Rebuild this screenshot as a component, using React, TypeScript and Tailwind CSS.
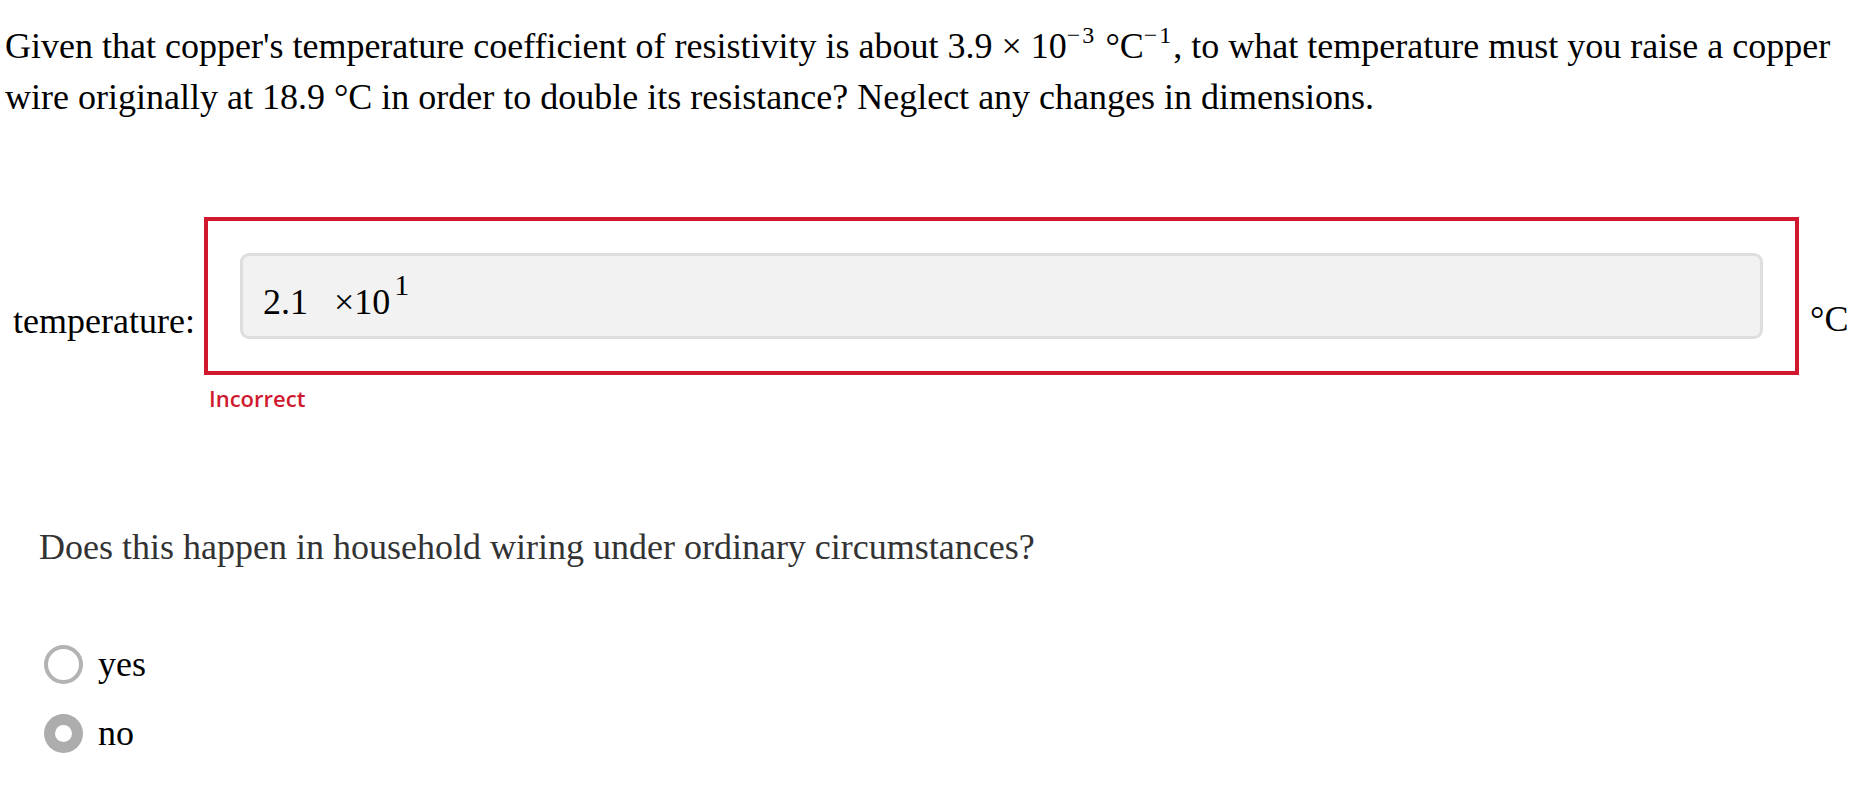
export default function App() {
  return (
    <div className="w-[1876px] h-[790px] bg-white text-black font-['Liberation_Serif',_'Times_New_Roman',_serif] text-[36px] leading-[51px]">
      {/* Question text */}
      <p className="pl-[5px] pt-[21px]">
        Given that copper's temperature coefficient of resistivity is about 3.9 × 10
        <span className="text-[24px] leading-none align-[15px] tracking-[2px]">−3</span> °C
        <span className="text-[24px] leading-none align-[15px] tracking-[2px]">−1</span>, to what temperature must you raise a copper
        wire originally at 18.9 °C in order to double its resistance? Neglect any changes in dimensions.
      </p>

      {/* Answer row */}
      <div className="mt-[94px] flex items-start">
        <span className="w-[204px] shrink-0 pl-[13px] mt-[79px] whitespace-nowrap">temperature:</span>
        <div className="w-[1595px] h-[158px] shrink-0 border-4 border-[#d0192f] p-[32px]">
          <div className="h-[86px] rounded-[9px] border-[3px] border-[#dedede] bg-[#f2f2f2] pl-[20px] pt-[14px] whitespace-nowrap">
            <span>2.1</span><span className="ml-[26px]">×10</span><span className="ml-[4px] text-[30px] leading-none align-[19px]">1</span>
          </div>
        </div>
        <span className="ml-[11px] mt-[77px]">°C</span>
      </div>

      <div className="pl-[209px] mt-[8px] font-['Open_Sans',_sans-serif] font-semibold text-[22px] leading-[30px] text-[#d0192f]">
        Incorrect
      </div>

      {/* Second question */}
      <p className="pl-[39px] mt-[109px] text-[#333]">
        Does this happen in household wiring under ordinary circumstances?
      </p>

      <div className="pl-[44px] mt-[66px] flex flex-col gap-[18px]">
        <label className="flex items-center gap-[15px]">
          <span className="w-[39px] h-[39px] rounded-full border-4 border-[#b3b3b3] bg-white" />
          <span>yes</span>
        </label>
        <label className="flex items-center gap-[15px]">
          <span className="w-[39px] h-[39px] rounded-full bg-[#adadad] flex items-center justify-center">
            <span className="w-[17px] h-[17px] rounded-full bg-white" />
          </span>
          <span>no</span>
        </label>
      </div>
    </div>
  )
}
